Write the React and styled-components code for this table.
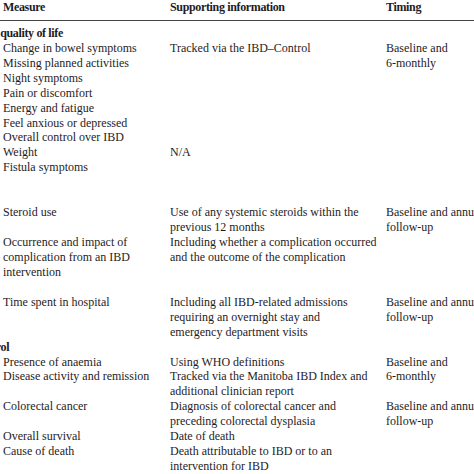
import React from 'react';
import styled, { createGlobalStyle } from 'styled-components';

const LINE = 14.93;

const GlobalStyle = createGlobalStyle`
  html, body {
    margin: 0;
    padding: 0;
    background: #ffffff;
  }
`;

const Page = styled.div`
  width: 474px;
  height: 474px;
  overflow: hidden;
  background: #ffffff;
`;

const Table = styled.table`
  margin-left: -72px;
  width: 598px;
  border-collapse: collapse;
  table-layout: fixed;
  font-family: "Liberation Serif", "Times New Roman", serif;
  font-size: 12px;
  line-height: ${LINE}px;
  color: #1f1c1d;
`;

const Col = styled.col`
  width: ${(p) => p.$w}px;
`;

const HeadCell = styled.th`
  padding: 0 0 5.5px;
  text-align: left;
  font-weight: 700;
  letter-spacing: -0.35px;
  white-space: nowrap;
  vertical-align: top;
  border-bottom: 1.5px solid #444444;
`;

const Cell = styled.td`
  padding: 0;
  white-space: nowrap;
  vertical-align: top;
`;

const GroupCell = styled.td`
  padding: 0 0 0 ${(p) => p.$lead}px;
  font-weight: 700;
  letter-spacing: -0.35px;
  white-space: nowrap;
`;

const SpacerCell = styled.td`
  padding: 0;
  height: ${(p) => p.$lines * LINE}px;
`;

const Line = styled.span`
  display: block;
`;

function Lines({ children }) {
  const items = Array.isArray(children) ? children : [children];
  return items.map((text) => <Line key={text}>{text}</Line>);
}

function Spacer({ lines }) {
  return (
    <tr>
      <SpacerCell colSpan={4} $lines={lines} />
    </tr>
  );
}

function App() {
  return (
    <>
      <GlobalStyle />
      <Page>
        <Table>
          <colgroup>
            <Col $w={75} />
            <Col $w={167} />
            <Col $w={216} />
            <Col $w={140} />
          </colgroup>
          <thead>
            <tr>
              <HeadCell />
              <HeadCell>Measure</HeadCell>
              <HeadCell>Supporting information</HeadCell>
              <HeadCell>Timing</HeadCell>
            </tr>
          </thead>
          <tbody>
            <Spacer lines={0.3} />
            <tr>
              <GroupCell colSpan={4} $lead={0}>Health-related quality of life</GroupCell>
            </tr>
            <tr>
              <Cell />
              <Cell>Change in bowel symptoms</Cell>
              <Cell rowSpan={7}>Tracked via the IBD–Control</Cell>
              <Cell rowSpan={9}>
                <Lines>{['Baseline and', '6-monthly']}</Lines>
              </Cell>
            </tr>
            <tr>
              <Cell />
              <Cell>Missing planned activities</Cell>
            </tr>
            <tr>
              <Cell />
              <Cell>Night symptoms</Cell>
            </tr>
            <tr>
              <Cell />
              <Cell>Pain or discomfort</Cell>
            </tr>
            <tr>
              <Cell />
              <Cell>Energy and fatigue</Cell>
            </tr>
            <tr>
              <Cell />
              <Cell>Feel anxious or depressed</Cell>
            </tr>
            <tr>
              <Cell />
              <Cell>Overall control over IBD</Cell>
            </tr>
            <tr>
              <Cell />
              <Cell>Weight</Cell>
              <Cell rowSpan={2}>N/A</Cell>
            </tr>
            <tr>
              <Cell />
              <Cell>Fistula symptoms</Cell>
            </tr>
            <Spacer lines={2} />
            <tr>
              <Cell />
              <Cell>Steroid use</Cell>
              <Cell>
                <Lines>{['Use of any systemic steroids within the', 'previous 12 months']}</Lines>
              </Cell>
              <Cell rowSpan={2}>
                <Lines>{['Baseline and annual', 'follow-up']}</Lines>
              </Cell>
            </tr>
            <tr>
              <Cell />
              <Cell>
                <Lines>{['Occurrence and impact of', 'complication from an IBD', 'intervention']}</Lines>
              </Cell>
              <Cell>
                <Lines>{['Including whether a complication occurred', 'and the outcome of the complication']}</Lines>
              </Cell>
            </tr>
            <Spacer lines={1} />
            <tr>
              <Cell />
              <Cell>Time spent in hospital</Cell>
              <Cell>
                <Lines>
                  {['Including all IBD-related admissions', 'requiring an overnight stay and', 'emergency department visits']}
                </Lines>
              </Cell>
              <Cell>
                <Lines>{['Baseline and annual', 'follow-up']}</Lines>
              </Cell>
            </tr>
            <tr>
              <GroupCell colSpan={4} $lead={9}>Disease control</GroupCell>
            </tr>
            <tr>
              <Cell />
              <Cell>Presence of anaemia</Cell>
              <Cell>Using WHO definitions</Cell>
              <Cell rowSpan={2}>
                <Lines>{['Baseline and', '6-monthly']}</Lines>
              </Cell>
            </tr>
            <tr>
              <Cell />
              <Cell>Disease activity and remission</Cell>
              <Cell>
                <Lines>{['Tracked via the Manitoba IBD Index and', 'additional clinician report']}</Lines>
              </Cell>
            </tr>
            <tr>
              <Cell />
              <Cell>Colorectal cancer</Cell>
              <Cell>
                <Lines>{['Diagnosis of colorectal cancer and', 'preceding colorectal dysplasia']}</Lines>
              </Cell>
              <Cell rowSpan={3}>
                <Lines>{['Baseline and annual', 'follow-up']}</Lines>
              </Cell>
            </tr>
            <tr>
              <Cell />
              <Cell>Overall survival</Cell>
              <Cell>Date of death</Cell>
            </tr>
            <tr>
              <Cell />
              <Cell>Cause of death</Cell>
              <Cell>
                <Lines>{['Death attributable to IBD or to an', 'intervention for IBD']}</Lines>
              </Cell>
            </tr>
          </tbody>
        </Table>
      </Page>
    </>
  );
}

export default App;
